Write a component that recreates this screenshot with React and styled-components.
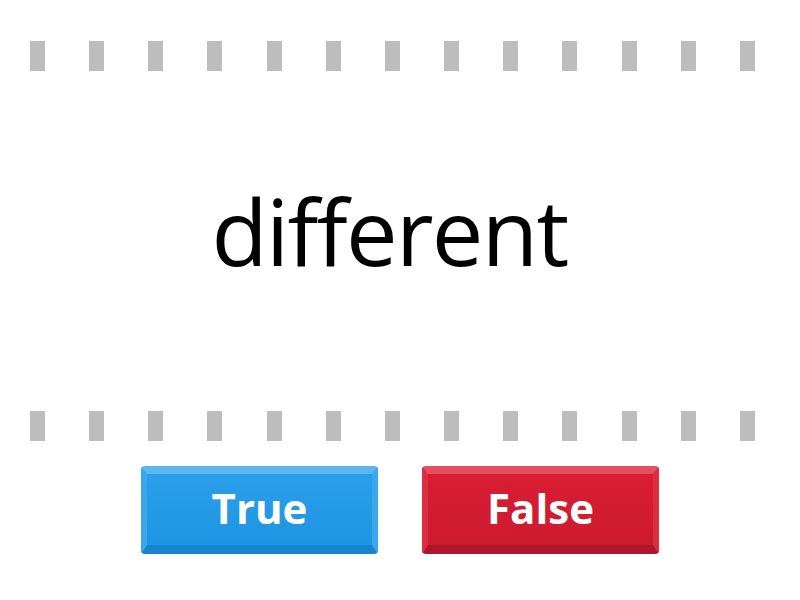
import React from 'react';
import styled, { createGlobalStyle } from 'styled-components';

const GlobalStyle = createGlobalStyle`
  html, body {
    margin: 0;
    padding: 0;
    background: #fff;
  }
  body {
    font-family: "Open Sans", "Noto Sans", sans-serif;
  }
`;

const Page = styled.div`
  width: 800px;
  height: 600px;
  display: flex;
  flex-direction: column;
  box-sizing: border-box;
  padding-top: 41px;
`;

const DashRow = styled.div`
  display: flex;
  justify-content: space-between;
  padding: 0 45px 0 30px;
  height: 30px;
`;

const Dash = styled.span`
  width: 15px;
  height: 30px;
  background: #bdbdbd;
`;

const Card = styled.div`
  height: 340px;
  display: flex;
  align-items: center;
  justify-content: center;
  padding-right: 21px;
`;

const Word = styled.div`
  font-size: 92px;
  letter-spacing: -1.7px;
  color: #000;
  line-height: 1;
  padding-bottom: 20px;
`;

const Answers = styled.div`
  display: flex;
  justify-content: center;
  gap: 44px;
  margin-top: 25px;
`;

const palette = {
  blue: { face: '#2a9ee9', end: '#1f95e3', light: '#5cb6f1', side: '#3aa6ec', dark: '#1684cf' },
  red: { face: '#da1d33', end: '#cc1a2f', light: '#e4505f', side: '#dd2e41', dark: '#b0162a' },
};

const Answer = styled.button`
  width: 237px;
  height: 88px;
  box-sizing: border-box;
  border: 6px solid ${(p) => palette[p.tone].side};
  border-top: 8px solid ${(p) => palette[p.tone].light};
  border-bottom: 9px solid ${(p) => palette[p.tone].dark};
  border-radius: 4px;
  background: linear-gradient(to bottom, ${(p) => palette[p.tone].face}, ${(p) => palette[p.tone].end});
  color: #fff;
  font-family: "Open Sans", sans-serif;
  font-weight: 700;
  font-size: 42px;
  display: flex;
  align-items: center;
  justify-content: center;
  padding: 0 0 5px;
  cursor: pointer;
`;

const dashes = Array.from({ length: 13 }, (_, i) => i);

const App = () => (
  <Page>
    <GlobalStyle />
    <DashRow>
      {dashes.map((i) => (
        <Dash key={i} />
      ))}
    </DashRow>
    <Card>
      <Word>different</Word>
    </Card>
    <DashRow>
      {dashes.map((i) => (
        <Dash key={i} />
      ))}
    </DashRow>
    <Answers>
      <Answer tone="blue">True</Answer>
      <Answer tone="red">False</Answer>
    </Answers>
  </Page>
);

export default App;
